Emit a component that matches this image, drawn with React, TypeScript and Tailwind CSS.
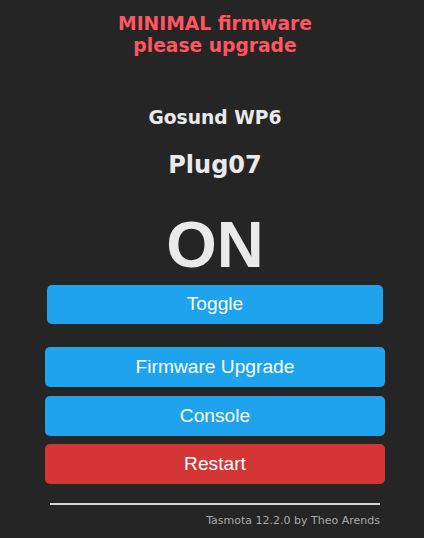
export default function App() {
  return (
    <div className="min-h-[538px] w-full bg-[#252525] text-[#eaeaea] font-['DejaVu_Sans',Verdana,sans-serif]">
      <div className="pl-[45px]">
        <div className="w-[340px] flex flex-col">
          <h3 className="mt-[13px] text-center text-[18.7px] leading-[22px] font-bold text-[#ff5661]">
            MINIMAL firmware
            <br />
            please upgrade
          </h3>

          <h3 className="mt-[50px] text-center text-[18.7px] leading-[22px] font-bold">Gosund WP6</h3>
          <h2 className="mt-[22px] text-center text-[24px] leading-[28px] font-bold">Plug07</h2>

          <div className="mt-[33px] text-center font-['Liberation_Sans',Arial,sans-serif] text-[65px] leading-[65px] font-bold">
            ON
          </div>

          <div className="mt-[8px] px-[2px]">
            <button className="w-full h-[39px] rounded-[5px] bg-[#1fa3ec] text-[#faffff] text-[19.2px] font-['Liberation_Sans',Arial,sans-serif]">
              Toggle
            </button>
          </div>

          <button className="mt-[23px] w-full h-[40px] rounded-[5px] bg-[#1fa3ec] text-[#faffff] text-[19.2px] font-['Liberation_Sans',Arial,sans-serif]">
            Firmware Upgrade
          </button>
          <button className="mt-[9px] w-full h-[40px] rounded-[5px] bg-[#1fa3ec] text-[#faffff] text-[19.2px] font-['Liberation_Sans',Arial,sans-serif]">
            Console
          </button>
          <button className="mt-[8px] w-full h-[40px] rounded-[5px] bg-[#d43535] text-[#faffff] text-[19.2px] font-['Liberation_Sans',Arial,sans-serif]">
            Restart
          </button>

          <div className="mt-[19px] px-[5px] text-right">
            <div className="h-[2px] bg-[#d6d6d6]" />
            <div className="mt-[9px] text-[11px] leading-[13px] text-[#aaaaaa]">Tasmota 12.2.0 by Theo Arends</div>
          </div>
        </div>
      </div>
    </div>
  );
}
